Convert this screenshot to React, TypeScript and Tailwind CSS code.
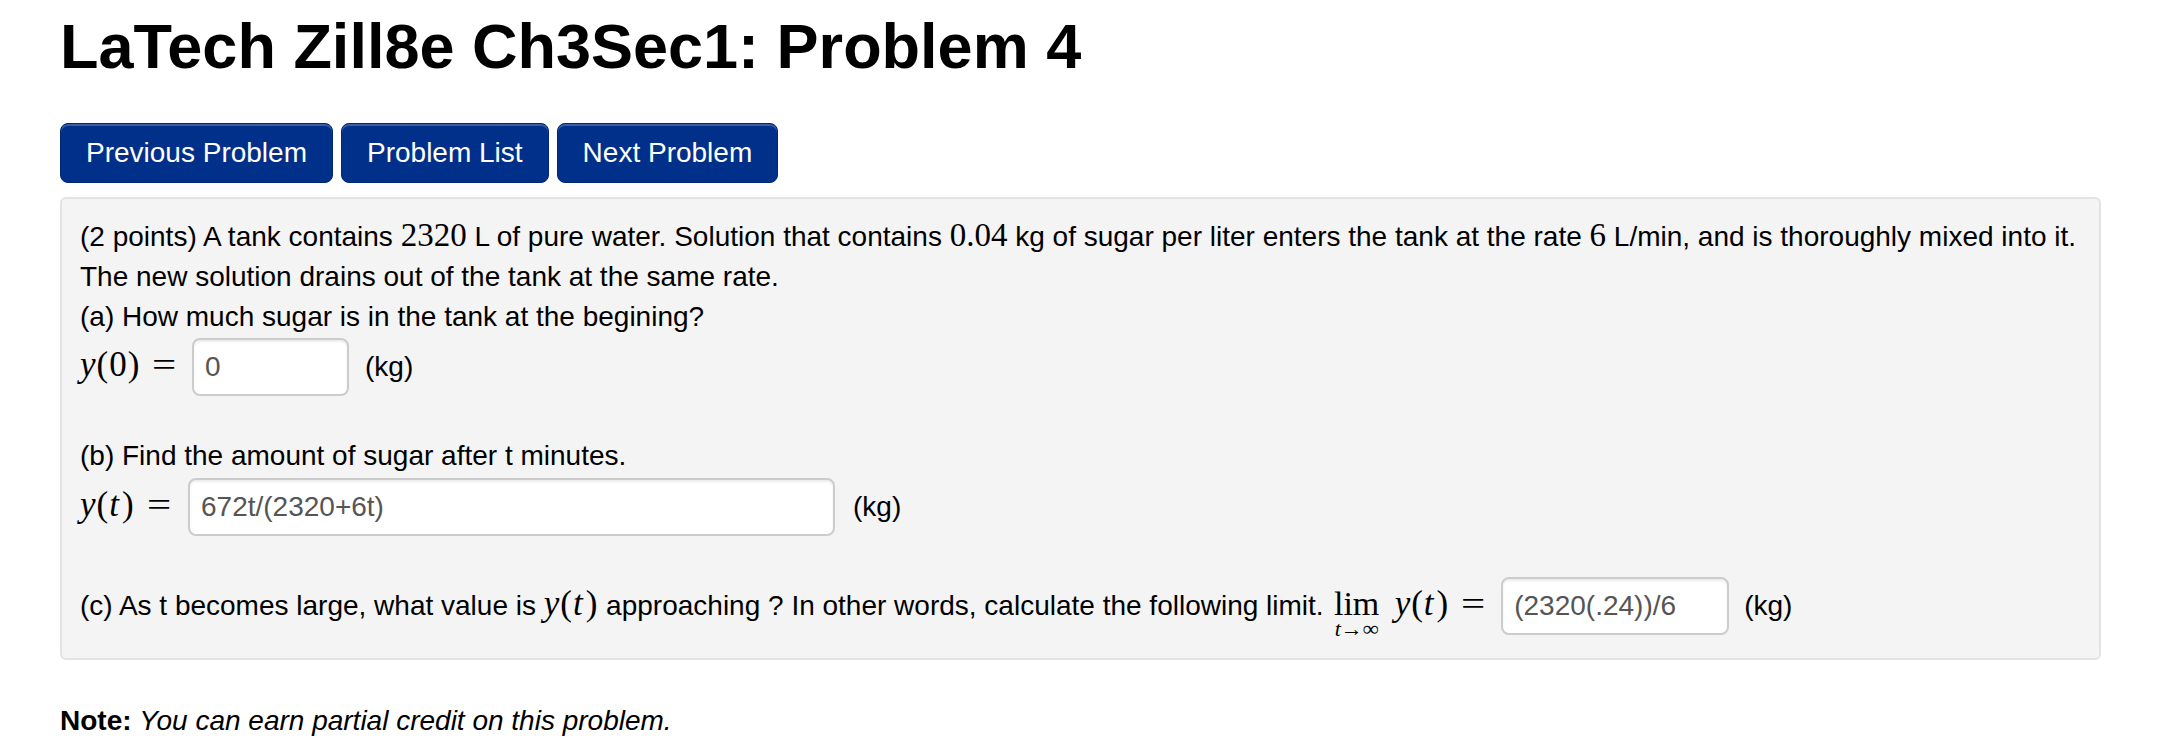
import React from 'react';

// MathJax-ish inline math, approximated with a serif face
const M: React.FC<{ children: React.ReactNode; className?: string }> = ({ children, className = '' }) => (
    <span className={`font-['Liberation_Serif','DejaVu_Serif',serif] text-[33px] leading-none ${className}`}>
        {children}
    </span>
);

const YOf: React.FC<{ v: string }> = ({ v }) => (
    <span className="font-['Liberation_Serif','DejaVu_Serif',serif] text-[35px] leading-none tracking-[1px]">
        <i>y</i>({v === 't' ? <i className="pr-[2px]">t</i> : v})
    </span>
);

const Eq: React.FC<{ v: string }> = ({ v }) => (
    <span className="whitespace-nowrap">
        <YOf v={v} />
        <span className="ml-[12px] inline-block w-[24px] scale-x-[1.3] text-center font-['Liberation_Serif','DejaVu_Serif',serif] text-[33px] leading-none">
            =
        </span>
    </span>
);

const Answer: React.FC<{ value: string; width: string }> = ({ value, width }) => (
    <input
        readOnly
        value={value}
        className={`${width} h-[58px] rounded-[8px] border-2 border-[#cccccc] bg-white px-[11px] text-[28px] text-[#555] shadow-[inset_0_2px_2px_rgba(0,0,0,0.075)] outline-none font-['Liberation_Sans',Arial,sans-serif]`}
    />
);

const navButtons = ['Previous Problem', 'Problem List', 'Next Problem'];

export default function App() {
    return (
        <div className="min-h-screen bg-white px-[60px] font-['Liberation_Sans',Arial,sans-serif] text-black">
            <h1 className="pt-[11px] text-[63px] font-bold leading-[70px]">LaTech Zill8e Ch3Sec1: Problem 4</h1>

            {/* Navigation */}
            <div className="mt-[42px] flex gap-[8px]">
                {navButtons.map((label) => (
                    <button
                        key={label}
                        className="h-[60px] rounded-[8px] border border-[#002870] bg-[#00308a] px-[25px] text-[28px] text-white shadow-[inset_0_2px_0_rgba(255,255,255,0.22)]"
                    >
                        {label}
                    </button>
                ))}
            </div>

            {/* Problem body */}
            <div className="mt-[14px] w-[2041px] rounded-[6px] border-2 border-[#e3e3e3] bg-[#f4f4f4] px-[18px] pt-[18px] pb-[22px] text-[28px] leading-[40px]">
                <div className="whitespace-nowrap">
                    (2 points) A tank contains <M>2320</M> L of pure water. Solution that contains <M>0.04</M> kg of sugar per liter enters the tank at the rate <M>6</M> L/min, and is thoroughly mixed into it.
                </div>
                <div className="whitespace-nowrap">The new solution drains out of the tank at the same rate.</div>
                <div className="whitespace-nowrap">(a) How much sugar is in the tank at the begining?</div>

                <div className="mt-[1px] flex h-[58px] items-baseline">
                    <span className="inline-block w-[112px]">
                        <Eq v="0" />
                    </span>
                    <Answer value="0" width="w-[157px]" />
                    <span className="ml-[16px]">(kg)</span>
                </div>

                <div className="mt-[40px] whitespace-nowrap">(b) Find the amount of sugar after t minutes.</div>
                <div className="mt-[2px] flex h-[58px] items-baseline">
                    <span className="inline-block w-[108px]">
                        <Eq v="t" />
                    </span>
                    <Answer value="672t/(2320+6t)" width="w-[647px]" />
                    <span className="ml-[18px]">(kg)</span>
                </div>

                <div className="mt-[41px] flex h-[59px] items-baseline whitespace-nowrap">
                    <span>
                        (c) As t becomes large, what value is <YOf v="t" /> approaching ? In other words, calculate the following limit.
                    </span>
                    <span className="ml-[6px] inline-flex w-[54px] flex-col items-center font-['Liberation_Serif','DejaVu_Serif',serif]">
                        <span className="text-[34px] leading-[31px]">lim</span>
                        <i className="whitespace-nowrap text-[22px] leading-[20px]">t→∞</i>
                    </span>
                    <span className="ml-[11px]">
                        <Eq v="t" />
                    </span>
                    <span className="ml-[16px]">
                        <Answer value="(2320(.24))/6" width="w-[228px]" />
                    </span>
                    <span className="ml-[15px]">(kg)</span>
                </div>
            </div>

            <p className="mt-[41px] text-[28px] leading-[40px]">
                <b>Note:</b> <i>You can earn partial credit on this problem.</i>
            </p>
        </div>
    );
}
